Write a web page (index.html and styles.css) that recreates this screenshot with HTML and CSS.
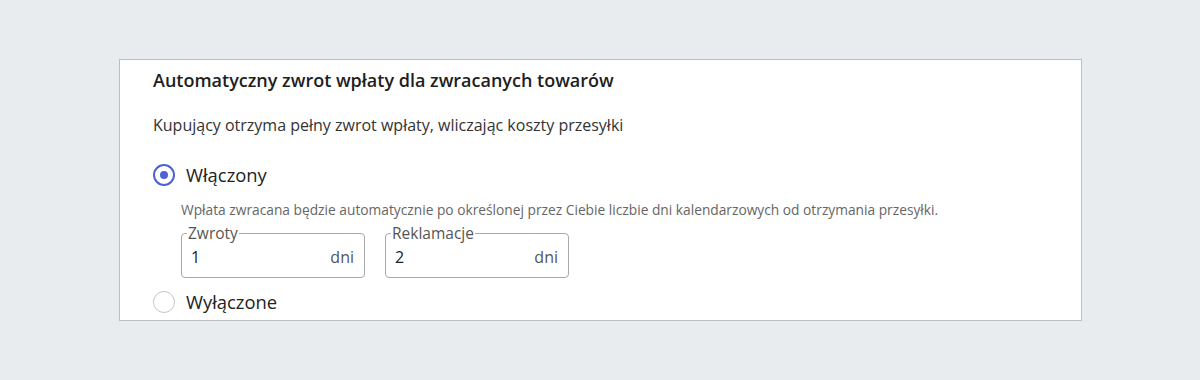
FILE: index.html
```html
<!DOCTYPE html>
<html>
<head>
    <title>Zwroty</title>
    <link rel="stylesheet" href="styles.css">
</head>
<body>
    <div class="card">
        <h2 class="card-title">Automatyczny zwrot wpłaty dla zwracanych towarów</h2>
        <p class="card-desc">Kupujący otrzyma pełny zwrot wpłaty, wliczając koszty przesyłki</p>

        <!-- opcja: włączony -->
        <label class="radio">
            <span class="radio-dot checked"></span>
            <span class="radio-label">Włączony</span>
        </label>
        <div class="option-body">
            <p class="hint">Wpłata zwracana będzie automatycznie po określonej przez Ciebie liczbie dni kalendarzowych od otrzymania przesyłki.</p>
            <div class="fields">
                <fieldset class="field">
                    <legend>Zwroty</legend>
                    <span class="value">1</span>
                    <span class="unit">dni</span>
                </fieldset>
                <fieldset class="field">
                    <legend>Reklamacje</legend>
                    <span class="value">2</span>
                    <span class="unit">dni</span>
                </fieldset>
            </div>
        </div>

        <!-- opcja: wyłączone -->
        <label class="radio">
            <span class="radio-dot"></span>
            <span class="radio-label">Wyłączone</span>
        </label>
    </div>
</body>
</html>
```

FILE: styles.css
```css
body {
    margin: 0;
    background-color: #e9ecef;
    font-family: "Open Sans", "Noto Sans", Arial, sans-serif;
    color: #222;
}
.card {
    box-sizing: border-box;
    width: 963px;
    height: 262px;
    margin: 59px 0 0 119px;
    padding: 9px 33px 0;
    background-color: #fff;
    border: 1px solid #bdbdbd;
    overflow: hidden;
}
.card-title {
    margin: 0;
    font-size: 18px;
    font-weight: 600;
    line-height: 22px;
    color: #1e1e1e;
}
.card-desc {
    margin: 23px 0 0;
    font-size: 16px;
    line-height: 22px;
    color: #333;
}
.radio {
    display: flex;
    align-items: center;
    gap: 11px;
    height: 26px;
}
.card-desc + .radio {
    margin-top: 26px;
}
.radio-dot {
    box-sizing: border-box;
    width: 22px;
    height: 22px;
    border-radius: 50%;
    border: 1.5px solid #c4c4c4;
    display: flex;
    align-items: center;
    justify-content: center;
}
.radio-dot.checked {
    border: 2px solid #4c62d9;
}
.radio-dot.checked::after {
    content: "";
    width: 8px;
    height: 8px;
    border-radius: 50%;
    background-color: #4c62d9;
}
.radio-label {
    font-size: 18.4px;
    line-height: 24px;
}
.option-body {
    padding-left: 28px;
    margin-top: 13px;
}
.hint {
    margin: 0;
    font-size: 13.75px;
    line-height: 18px;
    color: #666;
}
.fields {
    display: flex;
    gap: 20px;
    margin-top: 7px;
    margin-bottom: 11px;
}
.field {
    box-sizing: border-box;
    width: 184px;
    height: 52px;
    margin: 0;
    padding: 0 10px 0 9px;
    border: 1px solid #a9a9a9;
    border-radius: 4px;
    display: flex;
    align-items: center;
    justify-content: space-between;
}
.field legend {
    padding: 0 1px;
    margin-left: -4px;
    font-size: 15.5px;
    line-height: 14px;
    color: #555;
}
.value {
    font-size: 16px;
    color: #222;
    margin-top: -4px;
}
.unit {
    font-size: 16px;
    color: #555;
    margin-top: -4px;
}
```
